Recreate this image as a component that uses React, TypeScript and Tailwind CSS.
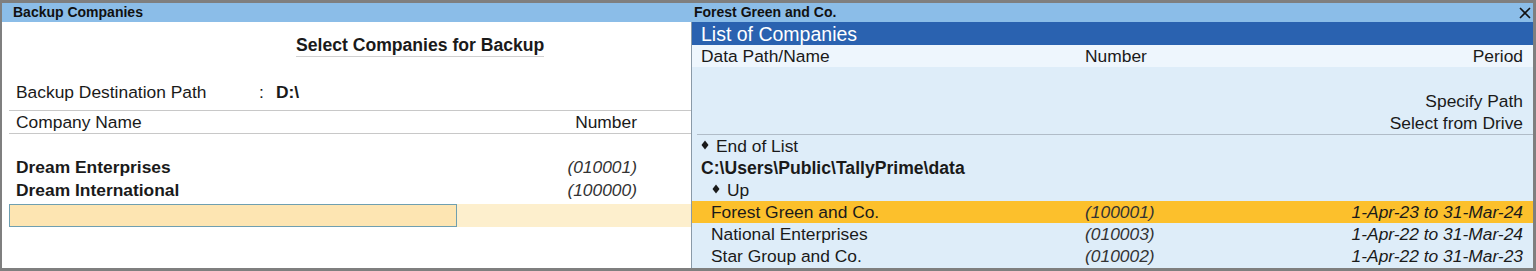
import React from "react";

const Diamond = () => (
  <svg width="8" height="10" viewBox="0 0 8 10" className="inline-block mr-[7px] mb-[2px]">
    <path d="M4 0.5 L7.5 5 L4 9.5 L0.5 5 Z" fill="#1a1a1a" />
  </svg>
);

export default function App() {
  return (
    <div className="w-[1536px] h-[271px] bg-[#7f7f7f] pt-[3px] pb-[3px] pl-[2px] pr-[3px] flex flex-col font-['Liberation_Sans',Arial,sans-serif] text-[#1a1a1a] overflow-hidden">
      {/* title bar */}
      <div className="h-[19px] bg-[#8bbde8] flex items-center text-[14px] font-bold leading-[19px] text-[#111]">
        <div className="w-[689px] pl-[11px]">Backup Companies</div>
        <div className="flex-1 flex items-center pl-[3px] pr-[2px]">
          <span className="flex-1">Forest Green and Co.</span>
          <svg width="12" height="12" viewBox="0 0 12 12">
            <path d="M1 1 L11 11 M11 1 L1 11" stroke="#111" strokeWidth="1.6" />
          </svg>
        </div>
      </div>
      {/* content */}
      <div className="flex-1 flex min-h-0">
        {/* left panel */}
        <div className="w-[689px] bg-white flex flex-col text-[17.4px] leading-[22px]">
          <div className="mt-[12px] pl-[294px]">
            <span className="inline-block font-bold text-[17.6px] border-b border-[#d0d0d0] pt-[1px] leading-[21px]">
              Select Companies for Backup
            </span>
          </div>
          <div className="mt-[24px] flex h-[22px] pl-[14px]">
            <span className="w-[243px]">Backup Destination Path</span>
            <span className="w-[17px]">:</span>
            <span className="font-bold">D:\</span>
          </div>
          <div className="mt-[7px] ml-[7px] border-t border-b border-[#c8c8c8] h-[24px] flex items-center pl-[7px] pr-[54px]">
            <span className="flex-1">Company Name</span>
            <span>Number</span>
          </div>
          <div className="mt-[22px] ml-[7px] flex pl-[7px] pr-[54px] h-[23px] leading-[23px] font-bold">
            <span className="flex-1">Dream Enterprises</span>
            <span className="font-normal italic text-[#333]">(010001)</span>
          </div>
          <div className="ml-[7px] flex pl-[7px] pr-[54px] h-[23px] leading-[23px] font-bold">
            <span className="flex-1">Dream International</span>
            <span className="font-normal italic text-[#333]">(100000)</span>
          </div>
          <div className="mt-[2px] ml-[7px] h-[23px] bg-[#fdefcd] flex">
            <div className="w-[448px] h-[23px] bg-[#fde5b2] border border-[#6f9fb0]"></div>
          </div>
        </div>
        {/* right panel */}
        <div className="flex-1 border-l border-[#8a9aa8] bg-[#deedf9] flex flex-col text-[17.4px] leading-[22px]">
          <div className="h-[23px] bg-[#2a62b0] text-white text-[19.5px] leading-[22px] pt-[1px] pl-[9px]">
            List of Companies
          </div>
          <div className="h-[22px] bg-[#eef6fd] flex pt-[1px] leading-[21px] pl-[9px] pr-[10px]">
            <span className="w-[384px]">Data Path/Name</span>
            <span className="flex-1">Number</span>
            <span>Period</span>
          </div>
          <div className="mt-[23px] flex flex-col items-end pr-[10px]">
            <span>Specify Path</span>
            <span>Select from Drive</span>
          </div>
          <div className="ml-[5px] border-t border-[#b0bcc8]"></div>
          <div className="h-[22px] pl-[9px] flex items-center">
            <Diamond />
            <span>End of List</span>
          </div>
          <div className="h-[22px] pl-[9px] font-bold text-[17.6px]">C:\Users\Public\TallyPrime\data</div>
          <div className="h-[22px] pl-[20px] flex items-center">
            <Diamond />
            <span>Up</span>
          </div>
          <div className="h-[22px] bg-[#fcc02c] flex pl-[19px] pr-[10px]">
            <span className="w-[374px]">Forest Green and Co.</span>
            <span className="flex-1 italic text-[#333]">(100001)</span>
            <span className="italic">1-Apr-23 to 31-Mar-24</span>
          </div>
          <div className="h-[22px] flex pl-[19px] pr-[10px]">
            <span className="w-[374px]">National Enterprises</span>
            <span className="flex-1 italic text-[#333]">(010003)</span>
            <span className="italic">1-Apr-22 to 31-Mar-24</span>
          </div>
          <div className="h-[22px] flex pl-[19px] pr-[10px]">
            <span className="w-[374px]">Star Group and Co.</span>
            <span className="flex-1 italic text-[#333]">(010002)</span>
            <span className="italic">1-Apr-22 to 31-Mar-23</span>
          </div>
        </div>
      </div>
    </div>
  );
}
